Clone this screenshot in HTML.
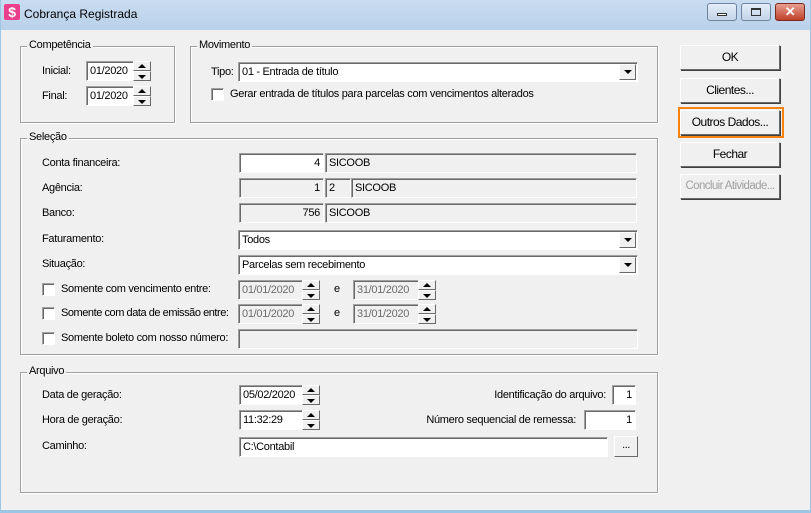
<!DOCTYPE html>
<html><head><meta charset="utf-8"><style>
*{box-sizing:border-box}
body{margin:0;width:811px;height:513px;overflow:hidden;background:#f0f0f0;font-family:Tahoma,"Liberation Sans",sans-serif;font-size:11px;letter-spacing:-0.3px;color:#000;position:relative}
.frame{position:absolute;left:0;top:0;width:811px;height:513px;border:1px solid #9cc6e6;border-bottom-width:3px;border-top:none;pointer-events:none}
.title{position:absolute;left:0;top:0;width:811px;height:30px;background:linear-gradient(#c9dcf0,#b9d1ea)}
.title .t{position:absolute;left:24px;top:7px;font-size:12px;letter-spacing:0}
.ico{position:absolute;left:4px;top:4px;width:16px;height:16px;background:#e83e8c;color:#fff;font-weight:bold;font-size:14px;text-align:center;line-height:16px;border-radius:2px}
.wb{position:absolute;top:3px;height:18px;border:1px solid #6d83a0;border-radius:3px;background:linear-gradient(#e4edf7,#c3d4e8)}
.a{position:absolute;white-space:nowrap}
.g{position:absolute;border:1px solid #a0a0a0;box-shadow:inset 1px 1px 0 #fff,1px 1px 0 #fff}
.gl{position:absolute;top:-8px;left:6px;background:#f0f0f0;padding:0 2px}
.in{position:absolute;height:20px;background:#fff;border:1px solid;border-color:#a0a0a0 #fff #fff #a0a0a0;box-shadow:inset 1px 1px 0 #696969;padding:3px 3px;white-space:nowrap;overflow:hidden}
.dis{background:#f0f0f0;color:#6d6d6d}
.r{text-align:right}
.sp{position:absolute;width:18px;height:20px}
.sp div{height:10px;background:#f0f0f0;border:1px solid;border-color:#fff #696969 #696969 #fff;position:relative}
.sp div:after{content:"";position:absolute;left:4px;top:2px;border-left:4px solid transparent;border-right:4px solid transparent}
.sp .u:after{border-bottom:4px solid #000}
.sp .d:after{border-top:4px solid #000;top:3px}
.dd{position:absolute;right:1px;top:1px;width:17px;height:16px;background:#f0f0f0;border:1px solid;border-color:#fff #696969 #696969 #fff}
.dd:after{content:"";position:absolute;left:4px;top:5px;border-left:4px solid transparent;border-right:4px solid transparent;border-top:4px solid #000}
.cb{position:absolute;width:13px;height:13px;background:#fff;border:1px solid;border-color:#a0a0a0 #fff #fff #a0a0a0;box-shadow:inset 1px 1px 0 #696969}
.btn{position:absolute;left:680px;width:100px;height:25px;background:#f0f0f0;border:1px solid;border-color:#fff #696969 #696969 #fff;box-shadow:1px 1px 0 #404040;text-align:center;line-height:23px;font-size:12px;white-space:nowrap;letter-spacing:-0.5px}
</style></head><body>
<div class="title"><div class="ico">$</div><div class="t">Cobrança Registrada</div>
<div class="wb" style="left:707px;width:30px"><div style="position:absolute;left:9px;top:9px;width:10px;height:3px;border:1px solid #333;background:#fff"></div></div>
<div class="wb" style="left:741px;width:30px"><div style="position:absolute;left:9px;top:4px;width:10px;height:8px;border:1px solid #333;border-top-width:2px"></div></div>
<div class="wb" style="left:775px;width:30px;background:linear-gradient(#e8a090,#c0402a);border-color:#7a2a1e;color:#fff;text-align:center;font-weight:bold;font-size:13px;line-height:16px">✕</div>
</div>

<div class="g" style="left:20px;top:46px;width:155px;height:77px"><span class="gl">Competência</span></div>
<div class="a" style="left:42px;top:65px">Inicial:</div>
<div class="in" style="left:86px;top:61px;width:48px">01/2020</div><div class="sp" style="left:133px;top:61px"><div class="u"></div><div class="d"></div></div>
<div class="a" style="left:42px;top:90px">Final:</div>
<div class="in" style="left:86px;top:86px;width:48px">01/2020</div><div class="sp" style="left:133px;top:86px"><div class="u"></div><div class="d"></div></div>

<div class="g" style="left:190px;top:46px;width:468px;height:77px"><span class="gl">Movimento</span></div>
<div class="a" style="left:211px;top:66px">Tipo:</div>
<div class="in" style="left:238px;top:62px;width:400px">01 - Entrada de título<div class="dd"></div></div>
<div class="cb" style="left:211px;top:88px"></div><div class="a" style="left:230px;top:88px">Gerar entrada de títulos para parcelas com vencimentos alterados</div>

<div class="g" style="left:20px;top:138px;width:638px;height:217px"><span class="gl">Seleção</span></div>
<div class="a" style="left:42px;top:157px">Conta financeira:</div>
<div class="in r" style="left:239px;top:153px;width:85px">4</div><div class="in dis" style="left:325px;top:153px;width:312px;color:#000">SICOOB</div>
<div class="a" style="left:42px;top:182px">Agência:</div>
<div class="in r dis" style="left:239px;top:178px;width:85px;color:#000">1</div><div class="in dis" style="left:325px;top:178px;width:26px;color:#000">2</div><div class="in dis" style="left:351px;top:178px;width:286px;color:#000">SICOOB</div>
<div class="a" style="left:42px;top:207px">Banco:</div>
<div class="in r dis" style="left:239px;top:203px;width:85px;color:#000">756</div><div class="in dis" style="left:325px;top:203px;width:312px;color:#000">SICOOB</div>
<div class="a" style="left:42px;top:233px">Faturamento:</div>
<div class="in" style="left:238px;top:230px;width:400px">Todos<div class="dd"></div></div>
<div class="a" style="left:42px;top:258px">Situação:</div>
<div class="in" style="left:238px;top:255px;width:400px">Parcelas sem recebimento<div class="dd"></div></div>
<div class="cb" style="left:42px;top:283px"></div><div class="a" style="left:61px;top:283px">Somente com vencimento entre:</div>
<div class="in dis" style="left:238px;top:280px;width:65px">01/01/2020</div><div class="sp" style="left:302px;top:280px"><div class="u"></div><div class="d"></div></div>
<div class="a" style="left:334px;top:283px">e</div>
<div class="in dis" style="left:353px;top:280px;width:66px">31/01/2020</div><div class="sp" style="left:418px;top:280px"><div class="u"></div><div class="d"></div></div>
<div class="cb" style="left:42px;top:307px"></div><div class="a" style="left:61px;top:307px;letter-spacing:-0.45px">Somente com data de emissão entre:</div>
<div class="in dis" style="left:238px;top:304px;width:65px">01/01/2020</div><div class="sp" style="left:302px;top:304px"><div class="u"></div><div class="d"></div></div>
<div class="a" style="left:334px;top:307px">e</div>
<div class="in dis" style="left:353px;top:304px;width:66px">31/01/2020</div><div class="sp" style="left:418px;top:304px"><div class="u"></div><div class="d"></div></div>
<div class="cb" style="left:42px;top:332px"></div><div class="a" style="left:61px;top:332px">Somente boleto com nosso número:</div>
<div class="in dis" style="left:238px;top:329px;width:400px"></div>

<div class="g" style="left:20px;top:372px;width:638px;height:121px"><span class="gl">Arquivo</span></div>
<div class="a" style="left:42px;top:389px">Data de geração:</div>
<div class="in" style="left:239px;top:385px;width:64px">05/02/2020</div><div class="sp" style="left:302px;top:385px"><div class="u"></div><div class="d"></div></div>
<div class="a" style="left:42px;top:414px">Hora de geração:</div>
<div class="in" style="left:239px;top:410px;width:64px">11:32:29</div><div class="sp" style="left:302px;top:410px"><div class="u"></div><div class="d"></div></div>
<div class="a" style="left:42px;top:440px">Caminho:</div>
<div class="in" style="left:239px;top:437px;width:369px">C:\Contabil</div>
<div class="btn" style="left:614px;top:436px;width:24px;height:21px;line-height:17px;font-size:11px;box-shadow:none">...</div>
<div class="a" style="left:400px;top:389px;width:206px;text-align:right">Identificação do arquivo:</div>
<div class="in r" style="left:612px;top:385px;width:24px">1</div>
<div class="a" style="left:370px;top:414px;width:206px;text-align:right">Número sequencial de remessa:</div>
<div class="in r" style="left:584px;top:410px;width:52px">1</div>

<div class="btn" style="top:45px">OK</div>
<div class="btn" style="top:78px">Clientes...</div>
<div style="position:absolute;left:678px;top:107px;width:106px;height:31px;border:2px solid #f7820d"></div>
<div class="btn" style="top:110px">Outros Dados...</div>
<div class="btn" style="top:142px">Fechar</div>
<div class="btn" style="top:174px;color:#a0a0a0;font-size:11.5px;letter-spacing:-0.6px">Concluir Atividade...</div>
<div class="frame"></div>
</body></html>
